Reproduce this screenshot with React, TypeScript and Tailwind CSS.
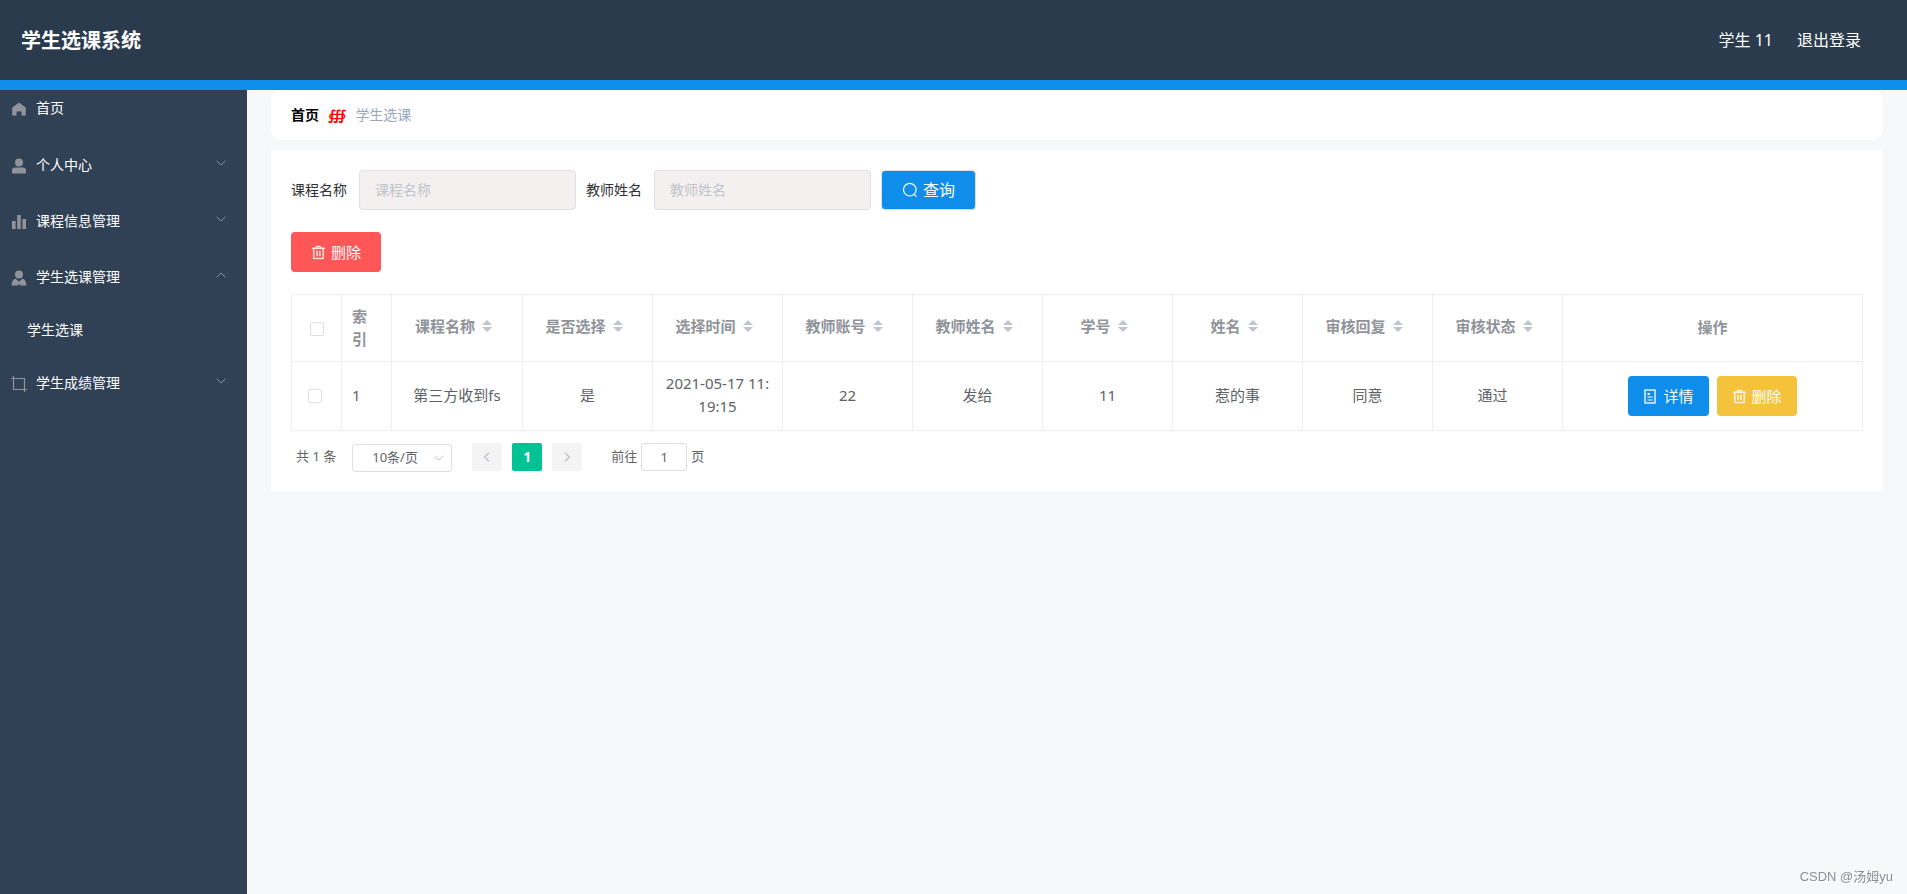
/**
 * Course selection admin page: top bar, side menu, search form and the
 * paginated table of selected courses.
 */
import React, { useState } from 'react';

interface CourseSelection {
  id: number;
  course: string;
  selected: string;
  time: string;
  teacherNo: string;
  teacher: string;
  studentNo: string;
  student: string;
  reply: string;
  status: string;
}

const COLUMNS: { key: keyof CourseSelection; label: string; cell?: string; col?: string }[] = [
  { key: 'course', label: '课程名称', col: 'w-[131px]' },
  { key: 'selected', label: '是否选择' },
  { key: 'time', label: '选择时间' },
  { key: 'teacherNo', label: '教师账号' },
  { key: 'teacher', label: '教师姓名' },
  { key: 'studentNo', label: '学号' },
  { key: 'student', label: '姓名' },
  { key: 'reply', label: '审核回复' },
  { key: 'status', label: '审核状态', cell: 'pr-5' },
];

const ROWS: CourseSelection[] = [
  {
    id: 1,
    course: '第三方收到fs',
    selected: '是',
    time: '2021-05-17 11:19:15',
    teacherNo: '22',
    teacher: '发给',
    studentNo: '11',
    student: '惹的事',
    reply: '同意',
    status: '通过',
  },
];

/* ---------- icons ---------- */

function DeleteIcon({ className }: { className: string }) {
  return (
    <svg viewBox="0 0 1024 1024" fill="currentColor" stroke="currentColor" strokeWidth="20" className={className} aria-hidden="true">
      <path d="M160 256H96a32 32 0 0 1 0-64h256V96a32 32 0 0 1 32-32h256a32 32 0 0 1 32 32v96h256a32 32 0 1 1 0 64h-64v672a32 32 0 0 1-32 32H192a32 32 0 0 1-32-32V256zm448-64v-64H416v64h192zM224 896h576V256H224v640zm192-128a32 32 0 0 1-32-32V416a32 32 0 0 1 64 0v320a32 32 0 0 1-32 32zm192 0a32 32 0 0 1-32-32V416a32 32 0 0 1 64 0v320a32 32 0 0 1-32 32z" />
    </svg>
  );
}

function SearchIcon() {
  return (
    <svg viewBox="0 0 16 16" fill="none" stroke="currentColor" strokeWidth="1.2" strokeLinecap="round" className="size-4" aria-hidden="true">
      <circle cx="7.8" cy="7.7" r="6.3" />
      <path d="M12.2 12.3l2 2" />
    </svg>
  );
}

function DetailIcon() {
  return (
    <svg viewBox="0 0 15 15" fill="none" stroke="currentColor" className="size-[15px]" aria-hidden="true">
      <rect x="2" y="1" width="10" height="13" strokeWidth="1.3" />
      <path d="M4.500 5h2.500" strokeWidth="2" />
      <path d="M4.500 8h5M4.500 11h5" strokeWidth="1.2" />
    </svg>
  );
}

function HomeIcon() {
  return (
    <svg viewBox="0 0 14 14" fill="currentColor" className="size-3.5" aria-hidden="true">
      <path d="M7 .5L.4 5.6a.6.6 0 0 0-.2.5v6.8c0 .3.2.6.6.6h3.700V9.400h5v4.100h3.700c.4 0 .6-.3.6-.6V6.100c0-.2-.1-.4-.2-.5L7 .5z" />
    </svg>
  );
}

function UserIcon() {
  return (
    <svg viewBox="0 0 14 16" fill="currentColor" className="h-4 w-3.5" aria-hidden="true">
      <circle cx="7" cy="4.500" r="4" />
      <path d="M3 9.500h8a3 3 0 0 1 3 3v2c0 .6-.4 1-1 1H1c-.6 0-1-.4-1-1v-2a3 3 0 0 1 3-3z" />
    </svg>
  );
}

function DataIcon() {
  return (
    <svg viewBox="0 0 14 14" fill="currentColor" className="size-3.5" aria-hidden="true">
      <path d="M0 6h3.600v8H0zM5.200 0h3.600v14H5.200zM10.400 4H14v10h-3.600z" />
    </svg>
  );
}

function CustomIcon() {
  return (
    <svg viewBox="0 0 16 16" fill="currentColor" className="-mx-px size-4" aria-hidden="true">
      <circle cx="8" cy="4.500" r="4" />
      <path d="M4.500 8.600L8 11.800l3.500-3.200c2 .6 3.600 2.600 4 6.900H9L8 13.800l-1 1.700H.5c.4-4.300 2-6.300 4-6.900z" />
    </svg>
  );
}

function CropIcon() {
  return (
    <svg viewBox="0 0 16 16" fill="none" stroke="currentColor" strokeWidth="1.200" className="-mx-px size-4" aria-hidden="true">
      <path d="M2.500 0v13.500H16M0 2.500h13.500V16" />
    </svg>
  );
}

function Chevron({ up = false, className }: { up?: boolean; className: string }) {
  return (
    <svg viewBox="0 0 10 6" fill="none" stroke="currentColor" className={className} aria-hidden="true">
      <path d={up ? 'M.7 5.200L5 1l4.300 4.200' : 'M.7.8L5 5 9.300.8'} />
    </svg>
  );
}

function SortCarets() {
  return (
    <span className="flex w-6 justify-center">
      <svg viewBox="0 0 10 12" fill="#c0c4cc" className="h-3 w-2.5" aria-hidden="true">
        <path d="M5 0l5 5H0zM5 12l5-5H0z" />
      </svg>
    </span>
  );
}

/* ---------- side menu ---------- */

const MENU = [
  { label: '个人中心', icon: <UserIcon /> },
  { label: '课程信息管理', icon: <DataIcon /> },
  { label: '学生选课管理', icon: <CustomIcon />, children: ['学生选课'] },
  { label: '学生成绩管理', icon: <CropIcon /> },
];

function SideMenu() {
  const [openMenu, setOpenMenu] = useState('学生选课管理');

  return (
    <nav className="w-[247px] shrink-0 bg-[#304156] text-sm text-white">
      <a href="#home" className="flex h-12 items-center gap-2.5 px-3 pb-2.5">
        <span className="text-[#909399]"><HomeIcon /></span>
        <span className="pb-0.5">首页</span>
      </a>
      {MENU.map((item) => {
        const open = openMenu === item.label;
        return (
          <div key={item.label}>
            <button
              type="button"
              aria-expanded={open}
              onClick={() => setOpenMenu(open ? '' : item.label)}
              className="flex h-14 w-full items-center gap-2.5 pr-[21px] pl-3"
            >
              <span className="text-[#909399]">{item.icon}</span>
              <span className="pb-0.5">{item.label}</span>
              <Chevron up={open} className="mb-1.5 ml-auto h-1.5 w-2.5 text-[#909399]" />
            </button>
            {open && item.children?.map((child) => (
              <a key={child} href="#selection" className="flex h-[50px] items-center pb-0.5 pl-[27px]">{child}</a>
            ))}
          </div>
        );
      })}
    </nav>
  );
}

/* ---------- content ---------- */

function SearchField({ id, label }: { id: string; label: string }) {
  return (
    <div className="flex items-center gap-3">
      <label htmlFor={id} className="text-sm text-[#303133]">{label}</label>
      <input
        id={id}
        type="text"
        placeholder={label}
        className="h-10 w-[217px] rounded border border-[#dcdfe6] bg-[#f5f0f0] px-[15px] pb-0.5 text-sm text-[#606266] outline-none placeholder:text-[#c0c4cc]"
      />
    </div>
  );
}

const CHECKBOX = 'block size-3.5 appearance-none rounded-xs border border-[#dcdfe6] bg-white checked:border-[#0f8deb] checked:bg-[#0f8deb]';
const CELL = 'border-r border-b border-[#ebeef5] px-2.5';

function SelectionTable() {
  return (
    <table className="w-full table-fixed border-separate border-spacing-0 border-t border-l border-[#ebeef5] text-[15px] leading-[23px] text-[#606266]">
      <colgroup>
        <col className="w-[50px]" />
        <col className="w-[50px]" />
        {COLUMNS.map((c) => <col key={c.key} className={c.col} />)}
        <col className="w-[300px]" />
      </colgroup>
      <thead className="text-[#909399]">
        <tr className="h-[67px]">
          <th className={`${CELL} pt-0.5`}>
            <input type="checkbox" aria-label="全选" className={`${CHECKBOX} mx-auto`} />
          </th>
          <th className={`${CELL} text-left`}>索引</th>
          {COLUMNS.map((c) => (
            <th key={c.key} className={CELL}>
              <button type="button" className="mx-auto flex items-center pb-1 font-bold">
                {c.label}
                <SortCarets />
              </button>
            </th>
          ))}
          <th className={`${CELL} pb-0.5`}>操作</th>
        </tr>
      </thead>
      <tbody>
        {ROWS.map((row) => (
          <tr key={row.id} className="h-[69px] text-center">
            <td className={CELL}>
              <input type="checkbox" aria-label={row.course} className={`${CHECKBOX} ml-1.5`} />
            </td>
            <td className={`${CELL} pb-0.5 text-left`}>{row.id}</td>
            {COLUMNS.map((c) => (
              <td key={c.key} className={`${CELL} pb-0.5 break-all ${c.cell ?? ''}`}>{row[c.key]}</td>
            ))}
            <td className={CELL}>
              <div className="flex justify-center gap-2 text-white">
                <button type="button" className="flex h-10 items-center gap-[5px] rounded bg-[#0f8deb] px-[15px]">
                  <DetailIcon />
                  详情
                </button>
                <button type="button" className="flex h-10 items-center gap-[5px] rounded bg-[#f5c23c] px-[15px]">
                  <DeleteIcon className="size-[15px]" />
                  删除
                </button>
              </div>
            </td>
          </tr>
        ))}
      </tbody>
    </table>
  );
}

function Pagination() {
  const [page, setPage] = useState('1');

  return (
    <div className="mt-3 flex h-7 items-center pl-[5px] text-[13px] text-[#606266]">
      <span>共 1 条</span>
      <div className="relative ml-4 pt-px">
        <select
          aria-label="每页条数"
          className="block h-7 w-[100px] appearance-none rounded-[3px] border border-[#dcdfe6] bg-white pl-[19px] outline-none"
        >
          <option>10条/页</option>
          <option>20条/页</option>
          <option>50条/页</option>
        </select>
        <Chevron className="pointer-events-none absolute top-3 right-2 h-1.5 w-2.5 text-[#c0c4cc]" />
      </div>
      <div className="ml-5 flex gap-2.5">
        <button type="button" disabled aria-label="上一页" className="flex h-7 w-[30px] items-center justify-center rounded-xs bg-[#f4f4f5] text-[#c0c4cc]">
          <svg viewBox="0 0 8 10" fill="none" stroke="currentColor" strokeWidth="1.500" className="h-2.5 w-2"><path d="M6 .7L1.700 5 6 9.300" /></svg>
        </button>
        <button type="button" aria-current="page" className="h-7 w-[30px] rounded-xs bg-[#00c292] text-sm font-bold text-white">1</button>
        <button type="button" disabled aria-label="下一页" className="flex h-7 w-[30px] items-center justify-center rounded-xs bg-[#f4f4f5] text-[#c0c4cc]">
          <svg viewBox="0 0 8 10" fill="none" stroke="currentColor" strokeWidth="1.500" className="h-2.5 w-2"><path d="M2 .7L6.300 5 2 9.300" /></svg>
        </button>
      </div>
      <label className="ml-[29px] flex items-center gap-1">
        前往
        <input
          type="text"
          value={page}
          onChange={(e) => setPage(e.target.value)}
          className="h-7 w-[46px] rounded-[3px] border border-[#dcdfe6] bg-white text-center outline-none"
        />
        页
      </label>
    </div>
  );
}

export default function App() {
  return (
    <div className="flex min-h-screen flex-col bg-[#f6f8fa] font-['Noto_Sans','Noto_Sans_CJK_SC',sans-serif]">
      <header className="flex h-[90px] items-center justify-between border-b-10 border-[#0f8deb] bg-[#2b3b4e] pr-[46px] pl-[21px] text-white">
        <h1 className="pt-0.5 text-xl font-bold">学生选课系统</h1>
        <div className="flex gap-6 text-base">
          <span>学生 11</span>
          <a href="#logout">退出登录</a>
        </div>
      </header>

      <div className="flex flex-1">
        <SideMenu />
        <main className="flex min-w-0 flex-1 flex-col gap-2.5 px-6">
          <nav aria-label="breadcrumb" className="flex h-[50px] items-center rounded-[10px] bg-white px-5 text-sm">
            <a href="#home" className="font-bold text-black">首页</a>
            <span className="mx-[9px] font-['DejaVu_Sans',sans-serif] font-bold text-[#ff0000]">∰</span>
            <span className="text-[#97a8be]">学生选课</span>
          </nav>

          <section className="bg-white p-5">
            <form className="flex items-center gap-2.5" onSubmit={(e) => e.preventDefault()}>
              <SearchField id="course" label="课程名称" />
              <SearchField id="teacher" label="教师姓名" />
              <button type="submit" className="flex h-10 items-center gap-[5px] rounded border border-[#dcdfe6] bg-[#0f8deb] px-5 text-base text-white">
                <SearchIcon />
                查询
              </button>
            </form>
            <button type="button" className="my-[22px] flex h-10 items-center gap-[5px] rounded bg-[#ff5757] px-5 text-[15px] text-white">
              <DeleteIcon className="size-[15px]" />
              删除
            </button>
            <SelectionTable />
            <Pagination />
          </section>
        </main>
      </div>

      <span className="fixed right-3.5 bottom-2 font-['Liberation_Sans','Noto_Sans_CJK_SC',sans-serif] text-[13px] text-[#8a8d91] [text-shadow:1px_1px_0_#fff]">
        CSDN @汤姆yu
      </span>
    </div>
  );
}
